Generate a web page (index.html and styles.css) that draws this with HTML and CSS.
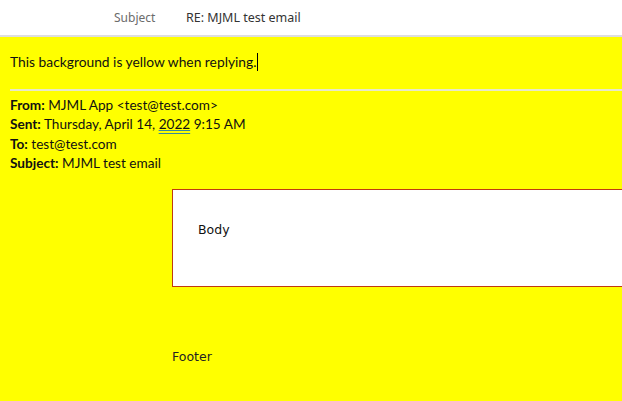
FILE: index.html
```html
<!DOCTYPE html>
<html lang="en">
<head>
    <meta charset="UTF-8">
    <title>RE: MJML test email</title>
    <link rel="stylesheet" href="styles.css">
</head>
<body>
<div class="header">
    <span class="header-label">Subject</span>
    <span class="header-value">RE: MJML test email</span>
</div>
<div class="compose">
    <div class="reply-text">This background is yellow when replying.<span class="caret"></span></div>
    <div class="divider"></div>
    <div class="quote-info">
        <div><strong>From:</strong> MJML App &lt;test@test.com&gt;</div>
        <div><strong>Sent:</strong> Thursday, April 14, <span class="grammar">2022</span> 9:15 AM</div>
        <div><strong>To:</strong> test@test.com</div>
        <div><strong>Subject:</strong> MJML test email</div>
    </div>
    <div class="mail">
        <div class="mail-body">Body</div>
        <div class="mail-footer">Footer</div>
    </div>
</div>
</body>
</html>
```

FILE: styles.css
```css
body {
    margin: 0;
    padding: 0;
    background-color: #ffffff;
    font-family: Lato, "Open Sans", sans-serif;
    overflow: hidden;
}
.header {
    height: 35px;
    display: flex;
    align-items: center;
    border-bottom: 2px solid #dedede;
    font-family: "Noto Sans", sans-serif;
    font-size: 12.5px;
}
.header-label {
    margin-left: 114px;
    width: 72px;
    font-size: 12px;
    color: #6b6b6b;
}
.header-value {
    color: #333333;
}
.compose {
    background-color: #ffff00;
    height: 364px;
    color: #111111;
}
.reply-text {
    padding: 15px 10px 0 10px;
    height: 37px;
    font-size: 13.8px;
    line-height: 20px;
}
.caret {
    display: inline-block;
    width: 1px;
    height: 18px;
    margin-left: 1px;
    background-color: #000000;
    vertical-align: -4px;
}
.divider {
    margin-left: 10px;
    height: 2px;
    background-color: #e8e8c8;
}
.quote-info {
    padding: 5px 10px 0 10px;
    font-size: 13.6px;
    line-height: 19.3px;
}
.grammar {
    text-decoration: underline double #3a8a9a;
}
.mail {
    padding: 16px 0 0 172px;
    font-family: "DejaVu Sans", sans-serif;
    font-size: 12.5px;
}
.mail-body {
    height: 98px;
    box-sizing: border-box;
    padding: 32px 0 0 25px;
    background-color: #ffffff;
    border: 1px solid #c03a10;
    border-right: none;
    color: #111111;
}
.mail-footer {
    padding-top: 62px;
    color: #222222;
}
```
